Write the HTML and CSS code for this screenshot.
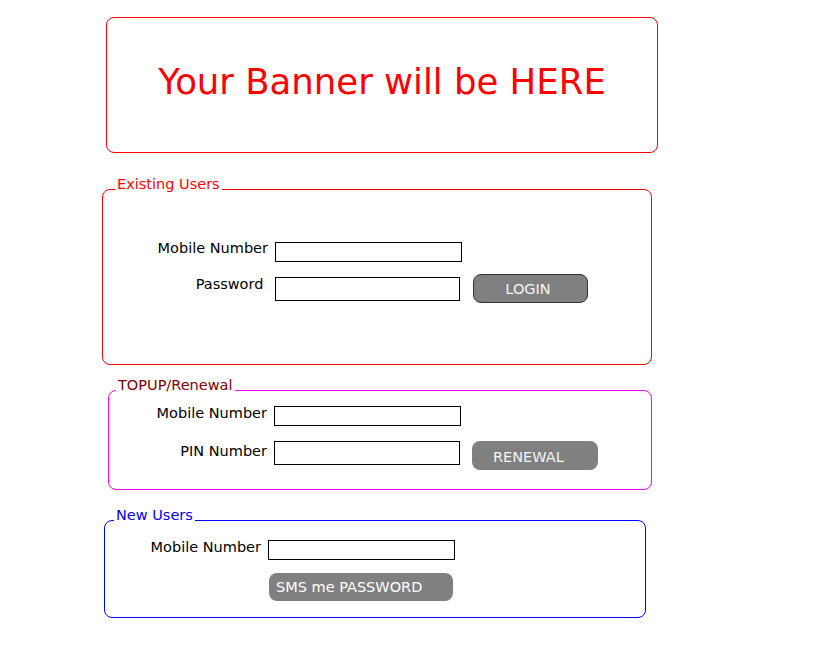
FILE: index.html
```html
<!DOCTYPE html>
<html lang="en">
<head>
    <meta charset="UTF-8">
    <title>Login</title>
    <link rel="stylesheet" href="styles.css">
</head>
<body>
    <div class="page">
        <!-- banner -->
        <div class="banner">Your Banner will be HERE</div>

        <!-- existing users -->
        <fieldset class="box box-login">
            <legend>Existing Users</legend>
            <div class="row">
                <label class="lbl" for="login-mobile">Mobile Number</label>
                <input class="txt txt-a mt2" type="text" id="login-mobile">
            </div>
            <div class="row row-gap12">
                <label class="lbl mt2" for="login-pass">Password&nbsp;</label>
                <input class="txt txt-b mt3" type="password" id="login-pass">
                <button class="btn btn-login" type="button">LOGIN</button>
            </div>
        </fieldset>

        <!-- topup -->
        <fieldset class="box box-topup">
            <legend>TOPUP/Renewal</legend>
            <div class="row">
                <label class="lbl" for="topup-mobile">Mobile Number</label>
                <input class="txt txt-a mt1" type="text" id="topup-mobile">
            </div>
            <div class="row row-gap15">
                <label class="lbl mt2" for="topup-pin">PIN Number</label>
                <input class="txt txt-c" type="text" id="topup-pin">
                <button class="btn btn-renew mt1" type="button">RENEWAL</button>
            </div>
        </fieldset>

        <!-- new users -->
        <fieldset class="box box-new">
            <legend>New Users</legend>
            <div class="row">
                <label class="lbl" for="new-mobile">Mobile Number</label>
                <input class="txt txt-a mt1" type="text" id="new-mobile">
            </div>
            <div class="row row-gap13">
                <button class="btn btn-sms" type="button">SMS me PASSWORD</button>
            </div>
        </fieldset>
    </div>
</body>
</html>
```

FILE: styles.css
```css
body {
    margin: 0;
    background: #fff;
    font-family: "DejaVu Sans", Verdana, sans-serif;
    font-size: 14.5px;
    color: #000;
}

.page {
    padding: 17px 0 0 102px;
}

.banner {
    box-sizing: border-box;
    width: 552px;
    height: 136px;
    margin-left: 4px;
    border: 1px solid #f00;
    border-radius: 8px;
    color: #f00;
    font-size: 35.5px;
    display: flex;
    align-items: center;
    justify-content: center;
    padding-bottom: 8px;
}

/* fieldsets - legend sits on the line like old IE */
.box {
    box-sizing: border-box;
    margin: 0;
    padding: 0;
    border-radius: 8px;
    min-inline-size: 0;
}

.box legend {
    font-size: 14.5px;
    line-height: 17px;
    padding: 0 2px 10px 2px;
}

.box-login {
    width: 550px;
    margin-top: 23px;
    padding: 37px 0 61px 0;
    border: 1px solid #f00;
}
.box-login legend {
    color: #f00;
    margin-left: 12px;
}
.box-login .lbl {
    width: 165px;
}

.box-topup {
    width: 544px;
    margin: 12px 0 0 6px;
    padding: 1px 0 19px 0;
    border: 1px solid #f0f;
}
.box-topup legend {
    color: #800000;
    margin-left: 7px;
}
.box-topup .lbl {
    width: 158px;
}

.box-new {
    width: 542px;
    margin: 17px 0 0 2px;
    padding: 5px 0 16px 0;
    border: 1px solid #00f;
}
.box-new legend {
    color: #00f;
    margin-left: 9px;
}
.box-new .lbl {
    width: 156px;
}

/* rows */
.row {
    display: flex;
    align-items: flex-start;
}
.row-gap12 { margin-top: 12px; }
.row-gap13 { margin-top: 13px; }
.row-gap15 { margin-top: 15px; }

.lbl {
    display: block;
    text-align: right;
    line-height: 17px;
    margin-right: 7px;
    white-space: nowrap;
}

.txt {
    box-sizing: border-box;
    margin: 0;
    padding: 1px 3px;
    border: 1px solid #000;
    font-family: inherit;
    font-size: 13px;
}
.txt-a { width: 187px; height: 20px; }
.txt-b { width: 185px; height: 24px; }
.txt-c { width: 186px; height: 24px; }

.mt1 { margin-top: 1px; }
.mt2 { margin-top: 2px; }
.mt3 { margin-top: 3px; }

/* buttons */
.btn {
    box-sizing: border-box;
    margin: 0;
    padding: 0;
    border: none;
    border-radius: 8px;
    background: #808080;
    color: #f4f4f4;
    font-family: inherit;
    font-size: 14.5px;
    line-height: 17px;
    cursor: pointer;
}

.btn-login {
    width: 115px;
    height: 29px;
    margin-left: 13px;
    border: 1px solid #333;
    padding: 1px 5px 0 0;
}

.btn-renew {
    width: 126px;
    height: 29px;
    margin-left: 12px;
    text-align: left;
    padding: 3px 0 0 21px;
}

.btn-sms {
    width: 184px;
    height: 28px;
    margin-left: 164px;
    text-align: left;
    padding-left: 7px;
    color: #fff;
}
```
